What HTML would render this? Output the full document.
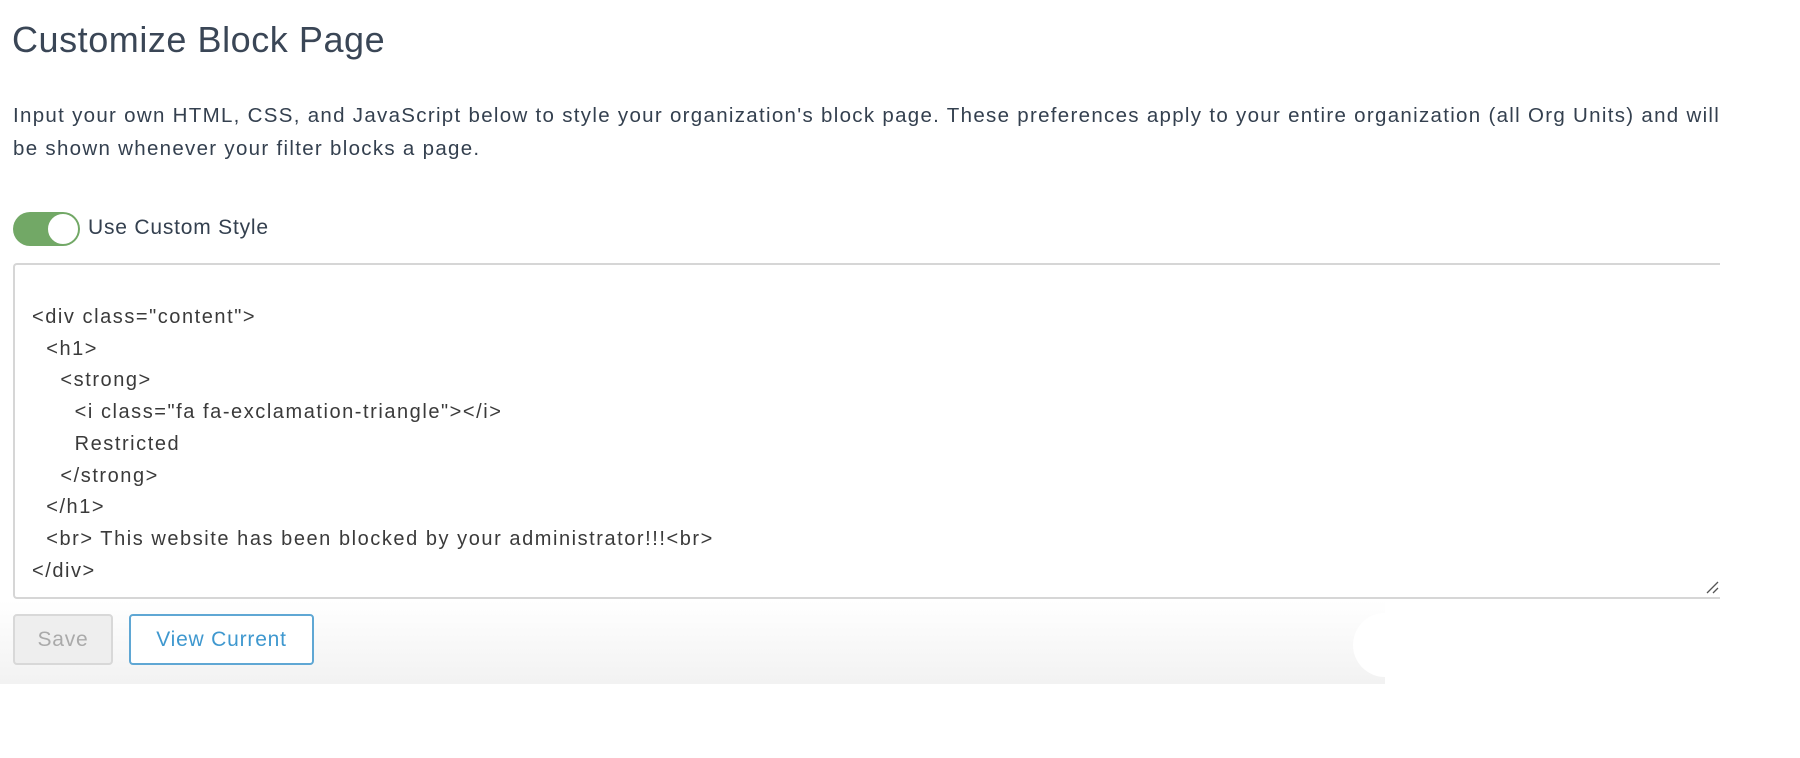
<!DOCTYPE html>
<html><head><meta charset="utf-8"><style>
body{margin:0;width:1800px;height:758px;background:#fff;font-family:"Liberation Sans",sans-serif;position:relative;overflow:hidden;color:#34404f}
.a{position:absolute;white-space:nowrap}
h1{position:absolute;left:12px;top:19px;margin:0;font-weight:normal;font-size:36px;color:#3a4656;letter-spacing:0.55px}
.p{left:13px;top:99px;font-size:20.5px;line-height:33px;letter-spacing:1.3px}
.band{left:0;top:600px;width:1385px;height:84px;background:linear-gradient(#fff,#f2f2f2)}
.blob{left:1353px;top:613px;width:460px;height:64px;background:#fff;border-radius:32px 0 0 32px}
.tg{left:13px;top:212px;width:67px;height:34px;background:#72a866;border-radius:17px}
.tg i{position:absolute;right:1px;top:1px;width:30px;height:30px;border-radius:50%;background:#fff;border:1px solid #72a866}
.ta{left:13px;top:263px;width:1705px;height:332px;border:2px solid #d6d6d6;border-right:none;border-radius:4px 0 0 4px;background:#fff}
.code{left:32px;top:302px;font-size:20px;line-height:31.7px;color:#3a3a3a;white-space:pre;letter-spacing:1.55px}
.btn{top:614px;height:47px;border-radius:4px;font-size:21px;line-height:47px;text-align:center;letter-spacing:0.8px}
</style></head><body>
<div class="a band"></div><div class="a blob"></div>
<h1>Customize Block Page</h1>
<div class="a p">Input your own HTML, CSS, and JavaScript below to style your organization's block page. These preferences apply to your entire organization (all Org Units) and will<br>be shown whenever your filter blocks a page.</div>
<div class="a tg"><i></i></div>
<div class="a" style="left:88px;top:212px;font-size:21px;line-height:32px;letter-spacing:0.8px">Use Custom Style</div>
<div class="a ta"></div>
<div class="a code">&lt;div class="content"&gt;
  &lt;h1&gt;
    &lt;strong&gt;
      &lt;i class="fa fa-exclamation-triangle"&gt;&lt;/i&gt;
      Restricted
    &lt;/strong&gt;
  &lt;/h1&gt;
  &lt;br&gt; This website has been blocked by your administrator!!!&lt;br&gt;
&lt;/div&gt;</div>
<svg class="a" style="left:1705px;top:580px" width="14" height="14"><path d="M2 13L13 2M8 13L13 8" stroke="#555" stroke-width="1.3"/></svg>
<div class="a btn" style="left:13px;width:96px;border:2px solid #d8d8d8;height:47px;background:#eeeeee;color:#aaa">Save</div>
<div class="a btn" style="left:129px;width:181px;border:2px solid #5fa7d4;background:#fff;color:#3f98cf">View Current</div>
</body></html>
